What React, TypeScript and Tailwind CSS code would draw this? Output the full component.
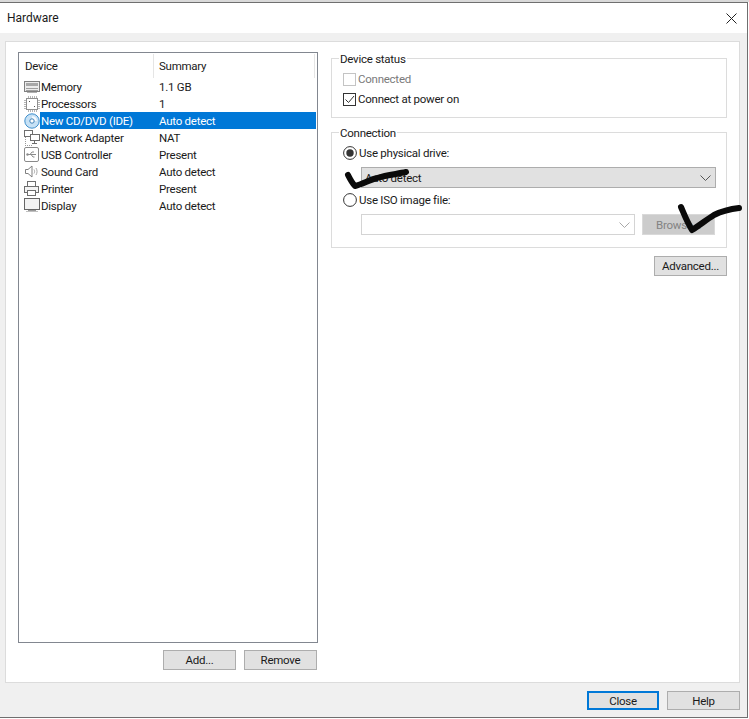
import React from "react";

const S = { fill: "none", stroke: "#6e6e6e", strokeWidth: 1 } as const;

const Memory = () => (
  <svg width="16" height="14" viewBox="0 0 16 14" shapeRendering="crispEdges">
    <rect x="0.5" y="1.5" width="15" height="10" fill="#ececec" stroke="#808080" />
    <rect x="2" y="3" width="12" height="3" fill="#a8a8a8" />
    <path d="M2 8.5h12M2 10.5h12" stroke="#a0a0a0" />
    <rect x="3" y="12" width="10" height="1" fill="#b0b0b0" />
  </svg>
);
const Cpu = () => (
  <svg width="16" height="16" viewBox="0 0 16 16" shapeRendering="crispEdges">
    <rect x="2.5" y="2.5" width="11" height="11" fill="#fff" stroke="#909090" />
    <path d="M4 0v2M6 0v2M8 0v2M10 0v2M12 0v2M4 14v2M6 14v2M8 14v2M10 14v2M12 14v2M0 4h2M0 6h2M0 8h2M0 10h2M0 12h2M14 4h2M14 6h2M14 8h2M14 10h2M14 12h2" stroke="#b5b5b5" />
    <rect x="5" y="5" width="1" height="1" fill="#555" />
    <rect x="10" y="10" width="1" height="1" fill="#555" />
  </svg>
);
const Disc = () => (
  <svg width="16" height="16" viewBox="0 0 16 16">
    <circle cx="8" cy="8" r="7.2" fill="#c6e1f5" stroke="#3f8fcc" />
    <path d="M8 3.2a4.8 4.8 0 0 1 4.8 4.8H8z" fill="#f7fbfe" />
    <circle cx="8" cy="8" r="2.2" fill="#fff" stroke="#3f82b8" />
  </svg>
);
const Network = () => (
  <svg width="16" height="16" viewBox="0 0 16 16" shapeRendering="crispEdges">
    <path d="M1.5 7v8M1 15.5h8" stroke="#9a9a9a" strokeDasharray="1 1" fill="none" />
    <rect x="0.5" y="0.5" width="8" height="6" {...S} fill="#fff" />
    <rect x="6.5" y="4.5" width="9" height="6" {...S} fill="#fff" />
    <path d="M10.5 11v2M8 13.5h5" stroke="#6e6e6e" />
  </svg>
);
const Usb = () => (
  <svg width="15" height="15" viewBox="0 0 15 15">
    <rect x="0.5" y="0.5" width="14" height="14" rx="1.5" fill="#fff" stroke="#8a8a8a" />
    <path d="M3 7.5h9M6 7.5l2-2.5h2M7 7.5l2 2.5h1.5" fill="none" stroke="#8a8a8a" />
    <circle cx="3.5" cy="7.5" r="1.2" fill="#8a8a8a" />
  </svg>
);
const Sound = () => (
  <svg width="15" height="15" viewBox="0 0 15 15">
    <path d="M1.5 5.5h2.5l4-3.5v11l-4-3.5H1.5z" fill="#fff" stroke="#808080" />
    <path d="M10 5.5c.8 1.2.8 2.8 0 4M12 4c1.4 2.2 1.4 4.8 0 7" fill="none" stroke="#a5a5a5" />
  </svg>
);
const Printer = () => (
  <svg width="15" height="15" viewBox="0 0 15 15" shapeRendering="crispEdges">
    <rect x="3.5" y="0.5" width="8" height="5" {...S} fill="#fff" />
    <rect x="0.5" y="5.5" width="14" height="6" {...S} fill="#f4f4f4" />
    <rect x="3.5" y="9.5" width="8" height="5" {...S} fill="#fff" />
  </svg>
);
const Display = () => (
  <svg width="16" height="16" viewBox="0 0 16 16" shapeRendering="crispEdges">
    <rect x="0.5" y="0.5" width="15" height="11" fill="#f3f3f3" stroke="#666" />
    <rect x="4" y="12" width="8" height="1" fill="#9a9a9a" />
    <rect x="2" y="13" width="12" height="1" fill="#c0c0c0" />
  </svg>
);

const rows = [
  { icon: <Memory />, name: "Memory", summary: "1.1 GB" },
  { icon: <Cpu />, name: "Processors", summary: "1" },
  { icon: <Disc />, name: "New CD/DVD (IDE)", summary: "Auto detect", selected: true },
  { icon: <Network />, name: "Network Adapter", summary: "NAT" },
  { icon: <Usb />, name: "USB Controller", summary: "Present" },
  { icon: <Sound />, name: "Sound Card", summary: "Auto detect" },
  { icon: <Printer />, name: "Printer", summary: "Present" },
  { icon: <Display />, name: "Display", summary: "Auto detect" },
];

const Btn = ({ label, cls = "" }: { label: string; cls?: string }) => (
  <div className={`w-[73px] h-[20px] flex items-center justify-center bg-[#e1e1e1] border border-[#adadad] text-[#1a1a1a] ${cls}`}>
    {label}
  </div>
);

const Chevron = ({ color }: { color: string }) => (
  <svg width="11" height="6" viewBox="0 0 11 6">
    <path d="M0.5 0.5l5 5 5-5" fill="none" stroke={color} />
  </svg>
);

const Radio = ({ on }: { on?: boolean }) => (
  <svg width="14" height="14" viewBox="0 0 14 14">
    <circle cx="7" cy="7" r="6.4" fill="#fff" stroke="#333" />
    {on && <circle cx="7" cy="7" r="3.7" fill="#333" />}
  </svg>
);

export default function App() {
  return (
    <div className="relative w-[749px] h-[719px] overflow-hidden bg-white pt-[2px] text-[11.5px] tracking-[-0.25px] leading-[16px] text-[#1a1a1a]" style={{ fontFamily: 'Roboto, "Liberation Sans", sans-serif' }}>
      <div className="absolute left-0 top-0 w-full h-[2px] bg-[#d9d9d9]" />
      <div className="w-[748px] h-[716px] border-t border-r border-b border-[#6f6f6f] flex flex-col">
        <div className="h-[30px] bg-white flex items-center justify-between pl-[7px] pr-[10px] text-[12px] tracking-normal">
          <span>Hardware</span>
          <svg width="11" height="11" viewBox="0 0 11 11">
            <path d="M0.5 0.5l10 10M10.5 0.5l-10 10" stroke="#222" fill="none" />
          </svg>
        </div>
        <div className="flex-1 bg-[#f0f0f0] pt-[8px] pl-[5px] pr-[7px] flex flex-col">
          <div className="w-[735px] h-[642px] bg-white border border-[#dcdcdc] pt-[10px] pl-[12px] flex gap-[13px]">
            <div className="w-[300px] flex flex-col">
              <div className="h-[591px] border border-[#828790] p-[1px]">
                <div className="flex h-[24px] items-center">
                  <div className="w-[134px] h-full pl-[5px] flex items-center border-r border-[#e5e5e5]">Device</div>
                  <div className="flex-1 h-full pl-[5px] flex items-center border-r border-[#e5e5e5] mr-[1px]">Summary</div>
                </div>
                {rows.map((r) => (
                  <div key={r.name} className="flex h-[17px] items-center">
                    <div className="w-[20px] shrink-0 pl-[4px] flex items-center justify-start">{r.icon}</div>
                    <div className={`flex flex-1 h-full items-center ${r.selected ? "bg-[#0078d7] text-white" : ""}`}>
                      <div className="w-[118px] pl-[1px] whitespace-nowrap">{r.name}</div>
                      <div className="pl-[1px] whitespace-nowrap">{r.summary}</div>
                    </div>
                  </div>
                ))}
              </div>
              <div className="flex justify-end gap-[8px] pt-[7px] pr-[1px]">
                <Btn label="Add..." />
                <Btn label="Remove" />
              </div>
            </div>
            <div className="w-[396px] flex flex-col pt-[6px]">
              <div className="relative h-[60px] border border-[#dcdcdc] pt-[13px] pl-[11px] flex flex-col">
                <span className="absolute left-[7px] -top-[8px] bg-white px-[1px] whitespace-nowrap">Device status</span>
                <div className="flex items-center h-[14px] gap-[2px] text-[#7a7a7a]">
                  <div className="w-[13px] h-[13px] border border-[#c4c4c4]" />
                  <span>Connected</span>
                </div>
                <div className="flex items-center h-[14px] mt-[6px] gap-[2px]">
                  <div className="w-[13px] h-[13px] border border-[#333] flex items-center justify-center">
                    <svg width="11" height="11" viewBox="0 0 11 11">
                      <path d="M1.5 5.5l3 3 5.5-6.5" fill="none" stroke="#333" />
                    </svg>
                  </div>
                  <span>Connect at power on</span>
                </div>
              </div>
              <div className="relative h-[116px] mt-[14px] border border-[#dcdcdc] pt-[13px] pl-[11px] pr-[11px] flex flex-col">
                <span className="absolute left-[7px] -top-[8px] bg-white px-[1px] whitespace-nowrap">Connection</span>
                <div className="flex items-center h-[14px] gap-[2px]"><Radio on /><span>Use physical drive:</span></div>
                <div className="ml-[18px] mt-[7px] h-[21px] w-[355px] bg-[#e1e1e1] border border-[#adadad] flex items-center justify-between pl-[3px] pr-[4px] shrink-0">
                  <span>Auto detect</span>
                  <Chevron color="#555" />
                </div>
                <div className="flex items-center h-[14px] mt-[5px] gap-[2px]"><Radio /><span>Use ISO image file:</span></div>
                <div className="flex ml-[18px] mt-[7px] gap-[7px]">
                  <div className="w-[274px] h-[21px] bg-white border border-[#d4d4d4] flex items-center justify-end pr-[4px]">
                    <Chevron color="#a8a8a8" />
                  </div>
                  <div className="w-[73px] h-[21px] bg-[#cccccc] border border-[#d9d9d9] flex items-center justify-center text-[#838383]">Browse...</div>
                </div>
              </div>
              <div className="flex justify-end mt-[8px]">
                <Btn label="Advanced..." />
              </div>
            </div>
          </div>
          <div className="flex justify-end gap-[8px] mt-[8px]">
            <div className="w-[72px] h-[19px] flex items-center justify-center bg-[#e1e1e1] border-2 border-[#0078d7]">Close</div>
            <div className="w-[73px] h-[19px] flex items-center justify-center bg-[#e1e1e1] border border-[#adadad]">Help</div>
          </div>
        </div>
      </div>
      <svg className="absolute left-0 top-0 pointer-events-none" width="749" height="719" viewBox="0 0 749 719">
        <path d="M348 175c2 4 4 8 7 11 8-2 14-6 22-8 10-3 20-4 29-6" fill="none" stroke="#0a0a0a" strokeWidth="6" strokeLinecap="round" strokeLinejoin="round" />
        <path d="M681 207c3 7 6 15 11 23 8-5 14-10 22-15 8-4 16-6 25-7" fill="none" stroke="#0a0a0a" strokeWidth="6" strokeLinecap="round" strokeLinejoin="round" />
      </svg>
    </div>
  );
}
